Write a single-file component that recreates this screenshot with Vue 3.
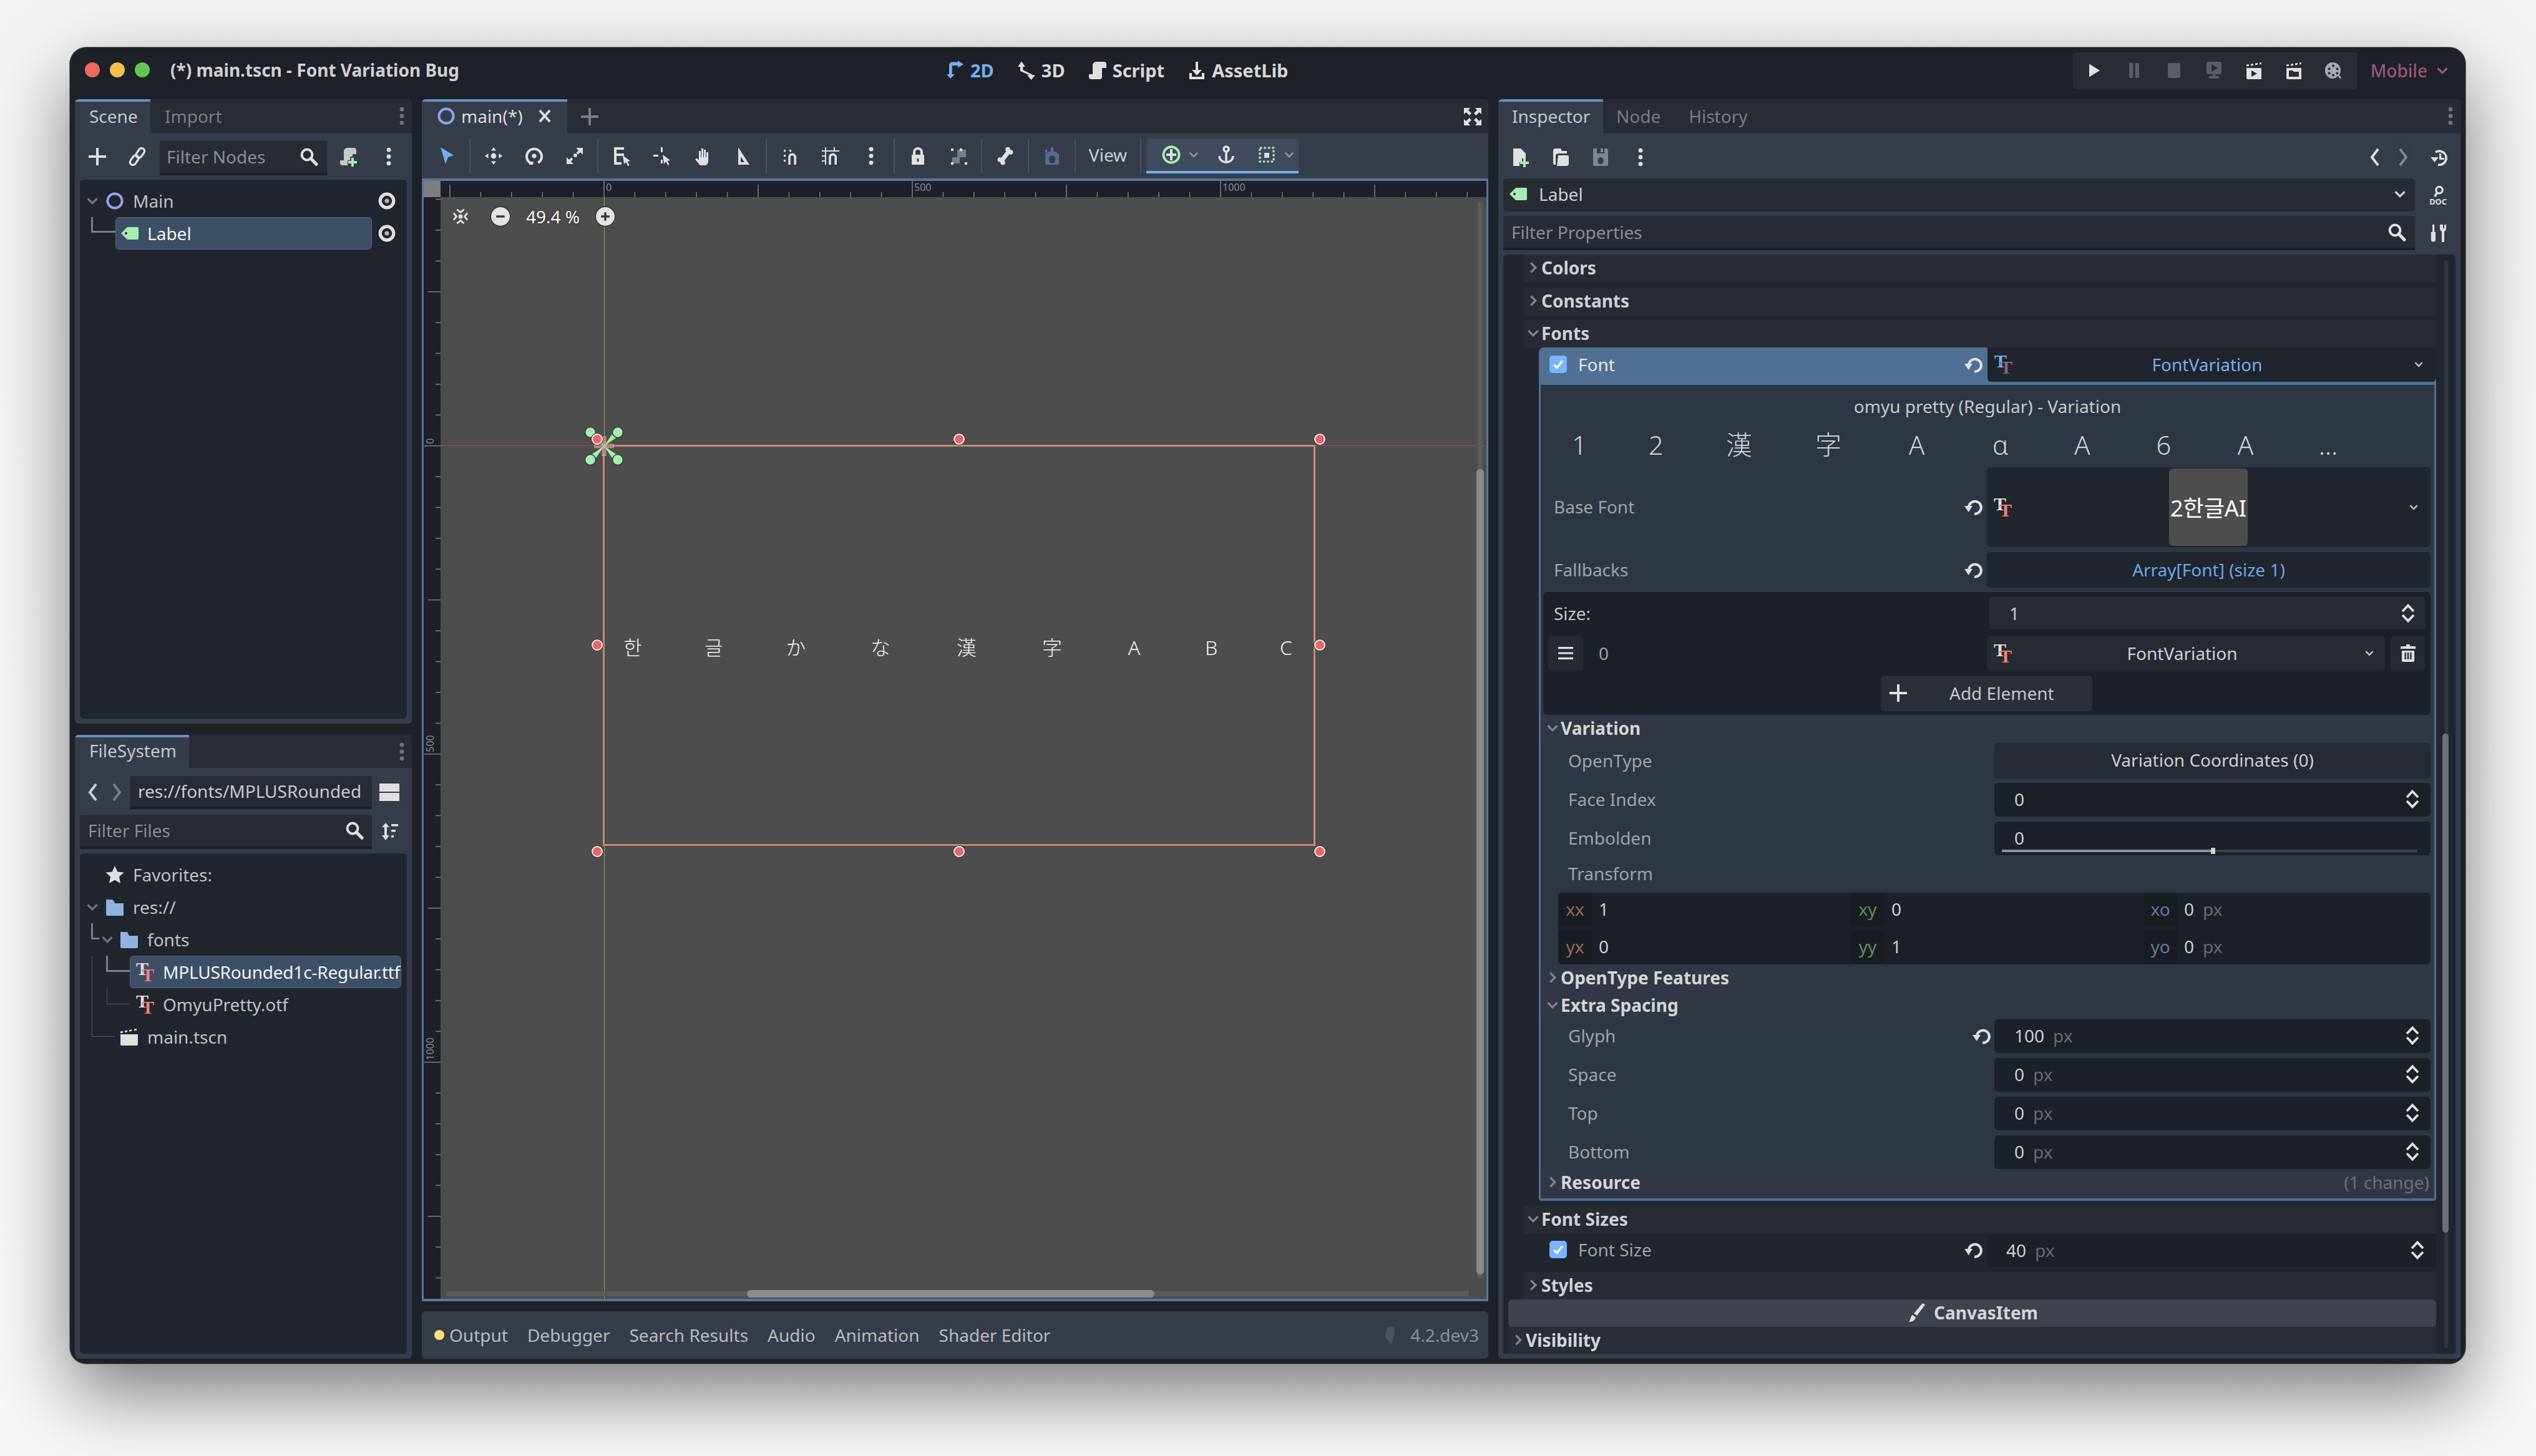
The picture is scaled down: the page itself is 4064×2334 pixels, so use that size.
<template>
  <div class="page">
    <!-- icon sprite, 16x16 like the editor icons -->
    <svg class="sprite" xmlns="http://www.w3.org/2000/svg">
      <symbol id="plus" viewBox="0 0 16 16"><path fill="currentColor" d="M7 1h2v6h6v2H9v6H7V9H1V7h6z" /></symbol>
      <symbol id="link" viewBox="0 0 16 16"><g fill="none" stroke="currentColor" stroke-width="1.7"><rect x="8.2" y="1" width="4.6" height="8.4" rx="2.3" transform="rotate(35 10.5 5)" /><rect x="3.2" y="6.6" width="4.6" height="8.4" rx="2.3" transform="rotate(35 5.5 11)" /></g></symbol>
      <symbol id="search" viewBox="0 0 16 16"><circle cx="6.5" cy="6.5" r="4.2" fill="none" stroke="currentColor" stroke-width="2" /><path d="M9.5 9.5l4.5 4.6" stroke="currentColor" stroke-width="2.6" stroke-linecap="round" /></symbol>
      <symbol id="dots" viewBox="0 0 16 16"><g fill="currentColor"><circle cx="8" cy="2.6" r="1.7" /><circle cx="8" cy="8" r="1.7" /><circle cx="8" cy="13.4" r="1.7" /></g></symbol>
      <symbol id="node" viewBox="0 0 16 16"><circle cx="8" cy="8" r="5.8" fill="none" stroke="#8da5f3" stroke-width="2" /></symbol>
      <symbol id="tag" viewBox="0 0 16 16"><path fill="#a5efac" d="M6 3h8a1 1 0 0 1 1 1v8a1 1 0 0 1-1 1H6L1 8z" /><circle cx="5" cy="8" r="1" fill="#2a3040" /></symbol>
      <symbol id="eye" viewBox="0 0 16 16"><circle cx="8" cy="8" r="5.4" fill="none" stroke="currentColor" stroke-width="2.6" /><circle cx="8" cy="8" r="1.8" fill="#b4b4b4" /></symbol>
      <symbol id="down" viewBox="0 0 16 16"><path fill="none" stroke="currentColor" stroke-width="2.2" d="M3 5.5l5 5 5-5" /></symbol>
      <symbol id="right" viewBox="0 0 16 16"><path fill="none" stroke="currentColor" stroke-width="2.2" d="M5.5 3l5 5-5 5" /></symbol>
      <symbol id="back" viewBox="0 0 16 16"><path fill="none" stroke="currentColor" stroke-width="2" d="M11 1.5L6 8l5 6.5" /></symbol>
      <symbol id="fwd" viewBox="0 0 16 16"><path fill="none" stroke="currentColor" stroke-width="2" d="M5 1.5L10 8l-5 6.5" /></symbol>
      <symbol id="close" viewBox="0 0 16 16"><path fill="none" stroke="currentColor" stroke-width="2.4" d="M3 2.5l10 11M13 2.5l-10 11" /></symbol>
      <symbol id="expand" viewBox="0 0 16 16"><path fill="currentColor" d="M1 1h5L4.5 2.8 7 5.3 5.3 7 2.8 4.500 1 6zM15 1v5l-1.800-1.500L10.700 7 9 5.300 11.500 2.800 10 1zM1 15v-5l1.800 1.500L5.300 9 7 10.700 4.500 13.200 6 15zM15 15h-5l1.500-1.800L9 10.700 10.700 9l2.500 2.500L15 10z" /></symbol>

      <symbol id="m2d" viewBox="0 0 16 16"><path fill="currentColor" d="M4 14.500L1 11h2V4c0-1.500 1-2.700 2.700-2.700H10V0l4.500 3L10 5.800V4H6.200C5.600 4 5.400 4.400 5.400 4.800V11H7.500z" /></symbol>
      <symbol id="m3d" viewBox="0 0 16 16"><path fill="currentColor" d="M4 .8L7 5H5.200v2.600l8.300 4.200H15l-3.200 3.700-3.300-3.700h2L3 8.500V5H1z" /></symbol>
      <symbol id="scroll" viewBox="0 0 16 16"><path fill="currentColor" d="M7 1h6c1.200 0 2 .8 2 2v3h-3.500v7c0 1.500-1 2-2 2H3c-1.500 0-2-1-2-2v-2h3V4c0-2 1.500-3 3-3z" /></symbol>
      <symbol id="scriptadd" viewBox="0 0 16 16"><path fill="currentColor" d="M7 1h5c1.200 0 2 .8 2 2v3h-3v2H9v3H7v4H3c-1.500 0-2-1-2-2v-2h3V4c0-2 1.500-3 3-3z" /><path fill="#a5efac" d="M10 9h2v2.500h2.500v2H12V16h-2v-2.500H7.500v-2H10z" /></symbol>
      <symbol id="asset" viewBox="0 0 16 16"><path fill="currentColor" d="M7 1h2v6.500h3L8 12 4 7.500h3zM2 10h2v3h8v-3h2v5H2z" /></symbol>

      <symbol id="select" viewBox="0 0 16 16"><path fill="currentColor" d="M3 1l10.500 6.500-4.500 1.500-2 5.500z" /></symbol>
      <symbol id="move" viewBox="0 0 16 16"><path fill="currentColor" d="M8 1l2 2.800H6zM8 15l-2-2.800h4zM1 8l2.800-2v4zM15 8l-2.800 2V6z" /><circle cx="8" cy="8" r="2.200" fill="currentColor" /></symbol>
      <symbol id="rotate" viewBox="0 0 16 16"><path fill="none" stroke="currentColor" stroke-width="2" d="M4.800 13.500A6 6 0 1 1 11.200 13.500" /><circle cx="8" cy="8" r="1.800" fill="currentColor" /><path fill="currentColor" d="M4 12.500h3.200V15H4z" /></symbol>
      <symbol id="scale" viewBox="0 0 16 16"><path fill="currentColor" d="M9 1.500h5.500V7l-2-2-1.800 1.800-1.400-1.400L11.100 3.600zM7 14.500H1.500V9l2 2 1.800-1.800 1.400 1.400L4.900 12.400z" /><circle cx="8.500" cy="7.500" r="1.500" fill="currentColor" /></symbol>
      <symbol id="list" viewBox="0 0 16 16"><path fill="currentColor" d="M2 1h8v2H4v3h6v2H4v5h4v2H2z" /><path fill="currentColor" d="M9 7.500l6 4.500-2.200.5 1.500 3-1.200.5-1.500-3L10 14.500z" /></symbol>
      <symbol id="pick" viewBox="0 0 16 16"><path fill="currentColor" d="M7 1h1.500v4H7zM1 7h4v1.500H1zM7 11h1.500v3H7z" /><path fill="currentColor" d="M8.500 7l6 4.500-2.200.5 1.500 3-1.200.5-1.500-3-1.600 2z" /></symbol>
      <symbol id="hand" viewBox="0 0 16 16"><path fill="currentColor" d="M6 15.500L2 10.800l1.200-1L5 11.200V4h1.500v5H7V2h1.500v7H9V3h1.500v6h.5V5h1.500v7c0 2.200-1 3.500-3 3.500z" /></symbol>
      <symbol id="ruler" viewBox="0 0 16 16"><path fill="currentColor" fill-rule="evenodd" d="M4 1l9 14H4zM6 8.500V13h3z" /></symbol>
      <symbol id="snap" viewBox="0 0 16 16"><path fill="none" stroke="currentColor" stroke-width="1.800" d="M7.500 15V9a2.300 2.300 0 0 1 4.600 0v6" /><path fill="currentColor" d="M3 3h1.500v1.600H3zM7.500 3H9v1.600H7.500zM3 7h1.500v1.600H3zM3 11h1.500v1.600H3z" /></symbol>
      <symbol id="grid" viewBox="0 0 16 16"><path fill="none" stroke="currentColor" stroke-width="1" d="M4 1v14M11 1v3M1 4h14M1 8h3M1 12h3" /><path fill="none" stroke="currentColor" stroke-width="1.800" d="M7.500 15V9a2.300 2.300 0 0 1 4.600 0v6" /></symbol>
      <symbol id="lock" viewBox="0 0 16 16"><path fill="currentColor" fill-rule="evenodd" d="M4 7V5a4 4 0 0 1 8 0v2h1v8H3V7zM6 7h4V5a2 2 0 0 0-4 0zM7.300 10v2.500h1.400V10z" /></symbol>
      <symbol id="group" viewBox="0 0 16 16"><path fill="#7c7f85" d="M7 3h7v6H9v5H3V9h4z" /><path fill="currentColor" d="M2 2h2v2H2zM9 2h2v2H9zM13 13h2v2h-2zM2 13h2v2H2z" /></symbol>
      <symbol id="bone" viewBox="0 0 16 16"><path d="M5 12L11 4" stroke="currentColor" stroke-width="3.400" /><g fill="currentColor"><circle cx="10" cy="2.800" r="1.900" /><circle cx="12.300" cy="5" r="1.900" /><circle cx="3.700" cy="11" r="1.900" /><circle cx="6" cy="13.300" r="1.900" /></g></symbol>
      <symbol id="skel" viewBox="0 0 16 16"><path fill="#5a6a9c" fill-rule="evenodd" d="M7 1h2v3.500h1.500l3 2V14a1 1 0 0 1-1 1h-9a1 1 0 0 1-1-1V6.500l3-2H7zM8 7.500A2.600 3.200 0 0 0 8 13.900 2.600 3.200 0 0 0 8 7.500zM2.500 3h1.500v2.500H2.500z" /></symbol>
      <symbol id="over" viewBox="0 0 16 16"><circle cx="8" cy="8" r="6.300" fill="none" stroke="#a5efac" stroke-width="2" /><path fill="#e0e0e0" d="M7 3.500h2V7h3v2H9v3.500H7V9H4V7h3z" /></symbol>
      <symbol id="anchor" viewBox="0 0 16 16"><circle cx="8" cy="3.500" r="2" fill="none" stroke="currentColor" stroke-width="1.800" /><path fill="none" stroke="currentColor" stroke-width="1.800" d="M8 5.500v9M2.500 9c0 3 2.500 5 5.500 5s5.500-2 5.500-5" /></symbol>
      <symbol id="dashrect" viewBox="0 0 16 16"><rect x="2.500" y="2.500" width="11" height="11" fill="none" stroke="#a5efac" stroke-width="1.600" stroke-dasharray="1.800 1.400" /><rect x="6" y="6.500" width="4" height="4" fill="#e0e0e0" /></symbol>

      <symbol id="play" viewBox="0 0 16 16"><path fill="currentColor" d="M4 2.800v10.400L12.500 8z" /></symbol>
      <symbol id="pause" viewBox="0 0 16 16"><path fill="currentColor" d="M4 2h3.200v12H4zM8.800 2H12v12H8.800z" /></symbol>
      <symbol id="stop" viewBox="0 0 16 16"><rect x="3" y="2" width="10" height="12" rx="1.200" fill="currentColor" /></symbol>
      <symbol id="remote" viewBox="0 0 16 16"><path fill="currentColor" fill-rule="evenodd" d="M3 1h10a1 1 0 0 1 1 1v8a1 1 0 0 1-1 1H3a1 1 0 0 1-1-1V2a1 1 0 0 1 1-1zM6 3v6l5-3zM7 11h2v1.500h3v2H4v-2h3z" /></symbol>
      <symbol id="clapplay" viewBox="0 0 16 16"><path fill="currentColor" fill-rule="evenodd" d="M2 3.300l2-.3v1.400l-2 .3zM5.500 2.800l2-.3v1.400l-2 .3zM9 2.300l2-.3v1.400l-2 .3zM12.500 1.800l1.500-.3v1.400l-1.500.3zM2 6h12v9H3a1 1 0 0 1-1-1zM6 8v5l4.500-2.500z" /></symbol>
      <symbol id="clapdir" viewBox="0 0 16 16"><path fill="currentColor" fill-rule="evenodd" d="M2 3.300l2-.3v1.400l-2 .3zM5.500 2.800l2-.3v1.400l-2 .3zM9 2.300l2-.3v1.400l-2 .3zM12.500 1.800l1.500-.3v1.400l-1.500.3zM2 6h12v9H3a1 1 0 0 1-1-1zM4 8v5h8V9H8L7 8z" /></symbol>
      <symbol id="reel" viewBox="0 0 16 16"><path fill="#a8aaae" fill-rule="evenodd" d="M7.500 1.500a6 6.500 0 0 1 5 10l1.500 2.500-1 .8-1.700-2.400A6 6.500 0 1 1 7.500 1.500zM7.500 3.300a1 1 0 1 0 .01 0zM4.300 5.800a1 1 0 1 0 .01 0zM10.700 5.800a1 1 0 1 0 .01 0zM4.300 9.200a1 1 0 1 0 .01 0zM10.700 9.200a1 1 0 1 0 .01 0zM7.500 10.800a1 1 0 1 0 .01 0z" /></symbol>
      <symbol id="ghost" viewBox="0 0 16 16"><path fill="currentColor" d="M9 1c2 0 3 1.500 3 4 0 3-1 5-1.500 7 0 2-.5 3-1.500 3-1 0-1.500-1-1.500-2-1.500-1-3-3-3-5 0-4 2-7 4.500-7z" /></symbol>

      <symbol id="newres" viewBox="0 0 16 16"><path fill="currentColor" d="M2 1h6l4 4v4H9v3H7v3H2z" /><path fill="#a5efac" d="M10 9h2v2.500h2.500v2H12V16h-2v-2.500H7.500v-2H10z" /></symbol>
      <symbol id="open" viewBox="0 0 16 16"><path fill="currentColor" d="M4 1h4l1 2h4v2H6c-1 0-2 1-2 2v7H2.500A1.500 1.500 0 0 1 2 13V3a2 2 0 0 1 2-2zM6 6.500h7.500a1 1 0 0 1 1 1V13a2 2 0 0 1-2 2H5z" /></symbol>
      <symbol id="save" viewBox="0 0 16 16"><path fill="currentColor" fill-rule="evenodd" d="M3 1h2v4h6V1h2l1 1v12a1 1 0 0 1-1 1H3a1 1 0 0 1-1-1V2a1 1 0 0 1 1-1zM8 8a2.300 2.800 0 1 0 .01 0zM8 1h2v3H8z" /></symbol>
      <symbol id="hist" viewBox="0 0 16 16"><path fill="none" stroke="currentColor" stroke-width="1.800" d="M5 4A5.500 5.500 0 1 1 7 14" /><path fill="currentColor" d="M1 8h6.500L4.300 12zM8 5h1.600v3.500H12v1.500H8z" /></symbol>
      <symbol id="doc" viewBox="0 0 16 16"><circle cx="9" cy="3.800" r="2.600" fill="none" stroke="currentColor" stroke-width="1.600" /><path d="M7.200 6l-1.800 3" stroke="currentColor" stroke-width="1.800" /><text x="8" y="15.300" font-size="6.400" font-weight="700" text-anchor="middle" fill="currentColor" font-family="Noto Sans, sans-serif">DOC</text></symbol>
      <symbol id="tools" viewBox="0 0 16 16"><path fill="currentColor" d="M3.500 1h1.600v6H6v6a1.800 1.800 0 0 1-3.600 0V7h1.100zM9.500 1v3c0 1.200.6 2 1.500 2.500V15h2V6.500c.9-.5 1.500-1.300 1.500-2.500V1H13v3h-1V1z" /></symbol>

      <symbol id="reset" viewBox="0 0 16 16"><path fill="none" stroke="currentColor" stroke-width="2" d="M4.500 8A5 5 0 1 1 9 13.800" /><path fill="currentColor" d="M1 7.500h6.500L4.300 12.500z" /></symbol>
      <symbol id="fontw" viewBox="0 0 16 16"><text x="0.500" y="10.500" font-size="15" font-weight="700" fill="#e0e0e0" font-family="Liberation Serif, serif">T</text><text x="5" y="15.500" font-size="15" font-weight="700" fill="#fc7f6f" font-family="Liberation Serif, serif">T</text></symbol>
      <symbol id="fontb" viewBox="0 0 16 16"><text x="0.500" y="10.500" font-size="15" font-weight="700" fill="#6fb2f5" font-family="Liberation Serif, serif">T</text><text x="5" y="15.500" font-size="15" font-weight="700" fill="#85687a" font-family="Liberation Serif, serif">T</text></symbol>
      <symbol id="spin" viewBox="0 0 16 16"><path fill="none" stroke="currentColor" stroke-width="1.900" d="M3.500 6.500L8 1.800l4.500 4.700M3.500 9.500L8 14.200l4.500-4.700" /></symbol>
      <symbol id="bars" viewBox="0 0 16 16"><path fill="currentColor" d="M2 3h12v1.600H2zM2 7.200h12v1.600H2zM2 11.400h12V13H2z" /></symbol>
      <symbol id="trash" viewBox="0 0 16 16"><path fill="currentColor" fill-rule="evenodd" d="M6.500 1h3v1.500H14V4.500H2V2.500h4.500zM3 6h10v8a1 1 0 0 1-1 1H4a1 1 0 0 1-1-1zM5.200 7.500V13h1.200V7.500zM7.400 7.500V13h1.200V7.500zM9.600 7.500V13h1.200V7.500z" /></symbol>
      <symbol id="pencil" viewBox="0 0 16 16"><path fill="currentColor" d="M13 .5l2 1.300L8.500 10.500 6 8.800zM5 10l2.500 1.700c-.5 2.300-2.500 3.800-5.500 3.800 1.500-1.500 1-4.500 3-5.500z" /></symbol>
      <symbol id="star" viewBox="0 0 16 16"><path fill="currentColor" d="M8 1l2.200 4.700 5.100.6-3.800 3.500 1 5.100L8 12.400l-4.500 2.500 1-5.100L.7 6.300l5.100-.6z" /></symbol>
      <symbol id="folder" viewBox="0 0 16 16"><path fill="#8db4e2" d="M1 2h5.500l1.500 3h7v9a1 1 0 0 1-1 1H2a1 1 0 0 1-1-1z" /></symbol>
      <symbol id="scene" viewBox="0 0 16 16"><path fill="currentColor" d="M1 3.700l2-.4v1.400l-2 .4zM4.500 3.100l2-.4v1.400l-2 .4zM8 2.500l2-.4v1.400l-2 .4zM12 1.800l2-.4v1.400l-2 .4zM1 6h14v8a1 1 0 0 1-1 1H2a1 1 0 0 1-1-1z" /></symbol>
      <symbol id="sort" viewBox="0 0 16 16"><path fill="currentColor" d="M5 1l3 3.500H6V11h2l-3 4-3-4h2V4.500H2zM9.500 2H15v1.800H9.500zM9.500 6.500H13v1.800H9.500zM9.500 11h2v1.800h-2z" /></symbol>
      <symbol id="split" viewBox="0 0 16 16"><path fill="currentColor" d="M0 1h16v6.500H0zM0 8.500h16V15H0z" /></symbol>
      <symbol id="fit" viewBox="0 0 16 16"><path fill="currentColor" d="M5.500 1.500L8 3.500l2.500-2 1 1.200L8 5.500 4.500 2.700zM5.500 14.500L8 12.500l2.500 2 1-1.200L8 10.500l-3.500 2.800zM1.500 5.500L3.500 8l-2 2.500 1.200 1L5.500 8 2.700 4.500zM14.500 5.500L12.500 8l2 2.500-1.200 1L10.500 8l2.800-3.500z" /><rect x="6.300" y="6.300" width="3.400" height="3.400" rx=".8" fill="currentColor" /></symbol>
    </svg>

    <div class="window">
      <header class="titlebar">
        <div class="title-left">
          <span class="light red"></span>
          <span class="light yellow"></span>
          <span class="light green"></span>
          <span class="title-text">(*) main.tscn - Font Variation Bug</span>
        </div>
        <nav class="modes">
          <span v-for="m in modes" :key="m.label" class="mode" :class="{ on: m.on }">
            <svg class="ic"><use :href="'#' + m.icon" /></svg>{{ m.label }}
          </span>
        </nav>
        <div class="title-right">
          <div class="run-group">
            <span v-for="r in runIcons" :key="r.icon" class="run" :class="{ dim: r.dim }">
              <svg class="ic"><use :href="'#' + r.icon" /></svg>
            </span>
          </div>
          <span class="mobile">Mobile<svg class="ic-chev"><use href="#down" /></svg></span>
        </div>
      </header>

      <div class="workspace">
        <!-- left docks -->
        <div class="col-left">
          <section class="dock">
            <div class="tabs">
              <span class="tab active tab-scene">Scene</span>
              <span class="tab">Import</span>
              <svg class="ic tab-dots"><use href="#dots" /></svg>
            </div>
            <div class="scene-tools">
              <span class="btn64"><svg class="ic"><use href="#plus" /></svg></span>
              <span class="btn64"><svg class="ic"><use href="#link" /></svg></span>
              <div class="input scene-filter">
                <span class="ph">Filter Nodes</span>
                <svg class="ic"><use href="#search" /></svg>
              </div>
              <span class="btn64">
                <svg class="ic script-add"><use href="#scriptadd" /></svg>
              </span>
              <span class="btn64"><svg class="ic"><use href="#dots" /></svg></span>
            </div>
            <div class="tree scene-tree">
              <div class="tr">
                <svg class="tw"><use href="#down" /></svg>
                <svg class="ic"><use href="#node" /></svg>
                <span class="tr-name">Main</span>
                <svg class="ic eye"><use href="#eye" /></svg>
              </div>
              <div class="tr tr-label">
                <span class="conn thick" style="left: 18px; top: 0; width: 39px; height: 25px"></span>
                <div class="sel sel-label">
                  <svg class="ic"><use href="#tag" /></svg>
                  <span>Label</span>
                </div>
                <svg class="ic eye"><use href="#eye" /></svg>
              </div>
            </div>
          </section>

          <section class="dock">
            <div class="tabs tabs-fs">
              <span class="tab active tab-fs">FileSystem</span>
              <svg class="ic tab-dots"><use href="#dots" /></svg>
            </div>
            <div class="fs-path">
              <svg class="ic nav-b"><use href="#back" /></svg>
              <svg class="ic nav-f"><use href="#fwd" /></svg>
              <div class="input path-input"><span>res://fonts/MPLUSRounded</span></div>
              <svg class="ic split"><use href="#split" /></svg>
            </div>
            <div class="fs-filter">
              <div class="input files-input">
                <span class="ph">Filter Files</span>
                <svg class="ic"><use href="#search" /></svg>
              </div>
              <svg class="ic sort"><use href="#sort" /></svg>
            </div>
            <div class="tree fs-tree">
              <div class="tr tr-fav">
                <svg class="ic"><use href="#star" /></svg>
                <span class="tr-name">Favorites:</span>
              </div>
              <div class="tr">
                <svg class="tw"><use href="#down" /></svg>
                <svg class="ic"><use href="#folder" /></svg>
                <span class="tr-name">res://</span>
              </div>
              <div class="tr tr-d1">
                <span class="conn thick" style="left: 18px; top: 0; width: 13px; height: 26px"></span>
                <svg class="tw"><use href="#down" /></svg>
                <svg class="ic"><use href="#folder" /></svg>
                <span class="tr-name">fonts</span>
              </div>
              <div class="tr">
                <span class="conn vline" style="left: 19px; top: 0; height: 104px"></span>
                <span class="conn thick" style="left: 42px; top: 0; width: 38px; height: 26px"></span>
                <div class="sel sel-file">
                  <svg class="ic"><use href="#fontw" /></svg>
                  <span>MPLUSRounded1c-Regular.ttf</span>
                </div>
              </div>
              <div class="tr">
                <span class="conn thin" style="left: 43px; top: 0; width: 37px; height: 26px"></span>
                <div class="file">
                  <svg class="ic"><use href="#fontw" /></svg>
                  <span class="tr-name-g">OmyuPretty.otf</span>
                </div>
              </div>
              <div class="tr tr-d1 tr-nochev">
                <span class="conn thin" style="left: 19px; top: 0; width: 36px; height: 26px"></span>
                <svg class="ic ml-icon"><use href="#scene" /></svg>
                <span class="tr-name">main.tscn</span>
              </div>
            </div>
          </section>
        </div>

        <!-- main editor -->
        <div class="col-center">
          <section class="editor">
            <div class="tabs tabs-main">
              <span class="tab active tab-main">
                <svg class="ic"><use href="#node" /></svg>
                <span class="tab-main-name">main(*)</span>
                <svg class="ic close"><use href="#close" /></svg>
              </span>
              <svg class="ic new-tab"><use href="#plus" /></svg>
              <svg class="ic fullscreen"><use href="#expand" /></svg>
            </div>
            <div class="toolbar">
              <template v-for="(t, i) in tools" :key="i">
                <span v-if="t === '|'" class="tool-sep"></span>
                <span v-else-if="t === 'View'" class="tool tool-view">View</span>
                <span v-else class="tool" :class="{ blue: t === 'select', skel: t === 'skel' }">
                  <svg class="ic"><use :href="'#' + t" /></svg>
                </span>
              </template>
              <div class="tool-group">
                <svg class="ic"><use href="#over" /></svg>
                <svg class="ic-chev gchev"><use href="#down" /></svg>
                <svg class="ic anchor"><use href="#anchor" /></svg>
                <svg class="ic"><use href="#dashrect" /></svg>
                <svg class="ic-chev gchev"><use href="#down" /></svg>
              </div>
            </div>
            <div class="viewport">
              <div class="ruler-top">
                <span class="ruler-corner"></span>
                <svg class="ruler-svg-h" width="1676" height="26">
                  <line v-for="t in hTicks" :key="t.x" :x1="t.x" :x2="t.x" :y1="t.y" y2="26" stroke="#7e8187" stroke-width="1.500" />
                  <text v-for="l in hLabels" :key="l.t" :x="l.x" y="16" class="ruler-text">{{ l.t }}</text>
                </svg>
              </div>
              <div class="view-body">
                <svg class="ruler-svg-v" width="27" height="1766">
                  <line v-for="t in vTicks" :key="t.y" :x1="t.x" x2="27" :y1="t.y" :y2="t.y" stroke="#7e8187" stroke-width="1.500" />
                  <text v-for="l in vLabels" :key="l.t" :transform="`translate(16 ${l.y}) rotate(-90)`" class="ruler-text">{{ l.t }}</text>
                </svg>
                <div class="canvas">
                  <span class="guide-v"></span>
                  <span class="guide-h"></span>
                  <div class="label-rect"></div>
                  <div class="label-text">
                    <span v-for="g in labelGlyphs" :key="g.c" class="label-glyph" :style="{ width: g.w + 'px' }">{{ g.c }}</span>
                  </div>
                  <svg class="gizmo" viewBox="-36 -36 72 72">
                    <g v-for="a in [45, 135, 225, 315]" :key="a" :transform="`rotate(${a})`">
                      <path d="M0 0L24 -4.500L24 4.500z" fill="#a5efac" />
                      <circle cx="31" cy="0" r="8.500" fill="#a5efac" stroke="#333" stroke-width="1.500" />
                    </g>
                    <path d="M-3.500 -16h7v32h-7zM-16 -3.500h32v7h-32z" fill="#c8c8c8" fill-opacity=".6" />
                    <path d="M-1.500 -14h3v10h-3zM-1.500 4h3v10h-3zM-14 -1.500h10v3h-10zM4 -1.500h10v3h-10z" fill="#e86a6a" />
                  </svg>
                  <span v-for="h in handles" :key="h.x + '-' + h.y" class="handle" :style="{ left: h.x + 'px', top: h.y + 'px' }"></span>
                  <div class="zoom-ctl">
                    <svg class="ic fit"><use href="#fit" /></svg>
                    <span class="zoom-btn">
                      <svg class="zoom-glyph" viewBox="0 0 16 16"><path fill="#333" d="M2 6.500h12v3H2z" /></svg>
                    </span>
                    <span class="zoom-val">49.4 %</span>
                    <span class="zoom-btn">
                      <svg class="zoom-glyph" viewBox="0 0 16 16"><path fill="#333" d="M6.500 2h3v4.500H14v3H9.500V14h-3V9.500H2v-3h4.500z" /></svg>
                    </span>
                  </div>
                  <span class="sb-v-track"></span>
                  <span class="sb-v-grab"></span>
                  <span class="sb-h-track"></span>
                  <span class="sb-h-grab"></span>
                </div>
              </div>
            </div>
          </section>
          <footer class="bottom">
            <span class="out-dot"></span>
            <span class="b-tab" style="margin-left: 8px">Output</span>
            <span v-for="b in bottomTabs" :key="b" class="b-tab">{{ b }}</span>
            <svg class="ic ghost"><use href="#ghost" /></svg>
            <span class="version">4.2.dev3</span>
          </footer>
        </div>

        <!-- inspector -->
        <section class="dock dock-right">
          <div class="tabs">
            <span class="tab active tab-insp">Inspector</span>
            <span class="tab tab-plain">Node</span>
            <span class="tab tab-plain">History</span>
            <svg class="ic tab-dots"><use href="#dots" /></svg>
          </div>
          <div class="insp-tools">
            <span class="btn64"><svg class="ic"><use href="#newres" /></svg></span>
            <span class="btn64"><svg class="ic"><use href="#open" /></svg></span>
            <span class="btn64 dim"><svg class="ic"><use href="#save" /></svg></span>
            <span class="btn64"><svg class="ic"><use href="#dots" /></svg></span>
            <svg class="ic hist-b"><use href="#back" /></svg>
            <svg class="ic hist-f dim"><use href="#fwd" /></svg>
            <svg class="ic hist"><use href="#hist" /></svg>
          </div>
          <div class="insp-select">
            <div class="select-box">
              <svg class="ic"><use href="#tag" /></svg>
              <span class="select-name">Label</span>
              <svg class="ic-chev"><use href="#down" /></svg>
            </div>
            <svg class="ic side"><use href="#doc" /></svg>
          </div>
          <div class="insp-filter">
            <div class="input filter-props">
              <span class="ph">Filter Properties</span>
              <svg class="ic"><use href="#search" /></svg>
            </div>
            <svg class="ic side"><use href="#tools" /></svg>
          </div>

          <div class="insp-scroll">
            <div class="insp-list">
              <div class="sec"><svg class="arr"><use href="#right" /></svg>Colors</div>
              <div class="sec sec-gap"><svg class="arr"><use href="#right" /></svg>Constants</div>
              <div class="sec sec-gap2"><svg class="arr"><use href="#down" /></svg>Fonts</div>

              <div class="font-row">
                <div class="font-left">
                  <span class="check"><svg viewBox="0 0 16 16"><path fill="none" stroke="#fff" stroke-width="2.400" d="M3 8.500l3.500 3.500L13 4" /></svg></span>
                  <span>Font</span>
                  <svg class="ic reset"><use href="#reset" /></svg>
                </div>
                <div class="font-val">
                  <svg class="ic"><use href="#fontb" /></svg>
                  <span class="val-center link-blue">FontVariation</span>
                  <svg class="ic-chev sm"><use href="#down" /></svg>
                </div>
              </div>

              <div class="sub">
                <div class="sub-title">omyu pretty (Regular)  - Variation</div>
                <div class="samples">
                  <span v-for="s in samples" :key="s.w" class="sample" :style="{ width: s.w + 'px' }">{{ s.c }}</span>
                </div>

                <div class="p-row base-row">
                  <div class="p-label">Base Font<svg class="ic reset"><use href="#reset" /></svg></div>
                  <div class="p-val base-val">
                    <svg class="ic"><use href="#fontw" /></svg>
                    <span class="preview">2한글AI</span>
                    <svg class="ic-chev sm"><use href="#down" /></svg>
                  </div>
                </div>
                <div class="p-row fallback-row">
                  <div class="p-label">Fallbacks<svg class="ic reset"><use href="#reset" /></svg></div>
                  <div class="p-val center-val link-blue2">Array[Font] (size 1)</div>
                </div>

                <div class="array">
                  <div class="array-size">
                    <span class="array-size-label">Size:</span>
                    <div class="input size-input"><span>1</span><svg class="ic"><use href="#spin" /></svg></div>
                  </div>
                  <div class="array-item">
                    <span class="handle-box"><svg class="ic"><use href="#bars" /></svg></span>
                    <span class="array-idx">0</span>
                    <div class="array-val">
                      <svg class="ic"><use href="#fontw" /></svg>
                      <span class="val-center">FontVariation</span>
                      <svg class="ic-chev sm"><use href="#down" /></svg>
                    </div>
                    <span class="trash-box"><svg class="ic"><use href="#trash" /></svg></span>
                  </div>
                  <div class="add-el">
                    <svg class="ic"><use href="#plus" /></svg>
                    <span>Add Element</span>
                  </div>
                </div>

                <div class="sub-sec"><svg class="arr"><use href="#down" /></svg>Variation</div>
                <div class="v-row v-open">
                  <div class="v-label">OpenType</div>
                  <div class="v-btn">Variation Coordinates (0)</div>
                </div>
                <div class="v-row v-gap">
                  <div class="v-label">Face Index</div>
                  <div class="v-val"><span>0</span><svg class="ic"><use href="#spin" /></svg></div>
                </div>
                <div class="v-row v-gap2">
                  <div class="v-label">Embolden</div>
                  <div class="v-val v-slider">
                    <span>0</span>
                    <span class="slider-track"><span class="slider-fill"></span><span class="slider-grab"></span></span>
                  </div>
                </div>
                <div class="v-transform">Transform</div>
                <div class="t-grid">
                  <div v-for="c in transformCells" :key="c.k" class="t-cell">
                    <span class="t-key" :class="c.tone">{{ c.k }}</span>
                    <span class="t-num">{{ c.v }}</span>
                    <span v-if="c.px" class="px">px</span>
                  </div>
                </div>
                <div class="sub-sec h44"><svg class="arr"><use href="#right" /></svg>OpenType Features</div>
                <div class="sub-sec h44"><svg class="arr"><use href="#down" /></svg>Extra Spacing</div>
                <div v-for="(s, i) in spacing" :key="s.n" class="v-row" :class="{ 'v-gap2': i > 0 }">
                  <div class="v-label">{{ s.n }}<svg v-if="s.reset" class="ic reset"><use href="#reset" /></svg></div>
                  <div class="v-val"><span>{{ s.v }}</span><span class="px">px</span><svg class="ic"><use href="#spin" /></svg></div>
                </div>
                <div class="sub-sec h47"><svg class="arr"><use href="#right" /></svg>Resource<span class="changes">(1 change)</span></div>
              </div>

              <div class="sec sec-sizes"><svg class="arr"><use href="#down" /></svg>Font Sizes</div>
              <div class="size-row">
                <div class="font-left plain">
                  <span class="check"><svg viewBox="0 0 16 16"><path fill="none" stroke="#fff" stroke-width="2.400" d="M3 8.500l3.500 3.500L13 4" /></svg></span>
                  <span>Font Size</span>
                  <svg class="ic reset"><use href="#reset" /></svg>
                </div>
                <div class="size-val"><span>40</span><span class="px">px</span><svg class="ic"><use href="#spin" /></svg></div>
              </div>
              <div class="sec sec-styles"><svg class="arr"><use href="#right" /></svg>Styles</div>
              <div class="canvas-item"><svg class="ic"><use href="#pencil" /></svg>CanvasItem</div>
              <div class="visibility"><svg class="arr"><use href="#right" /></svg>Visibility</div>
            </div>
            <div class="insp-bar"><span class="insp-bar-grab"></span></div>
          </div>
        </section>
      </div>
    </div>
  </div>
</template>

<script setup>
const modes = [
  { icon: 'm2d', label: '2D', on: true },
  { icon: 'm3d', label: '3D' },
  { icon: 'scroll', label: 'Script' },
  { icon: 'asset', label: 'AssetLib' },
]

const runIcons = [
  { icon: 'play' },
  { icon: 'pause', dim: true },
  { icon: 'stop', dim: true },
  { icon: 'remote', dim: true },
  { icon: 'clapplay' },
  { icon: 'clapdir' },
  { icon: 'reel' },
]

const tools = [
  'select', '|', 'move', 'rotate', 'scale', '|', 'list', 'pick', 'hand', 'ruler', '|',
  'snap', 'grid', 'dots', '|', 'lock', 'group', '|', 'bone', '|', 'skel', '|', 'View', '|',
]

const bottomTabs = ['Debugger', 'Search Results', 'Audio', 'Animation', 'Shader Editor']

// rulers: 0 sits at x=262 / y=399 of their svg, a tick every 50 units (49.4px)
const step = 49.4
const hTicks = []
const hLabels = []
for (let i = -5; i <= 29; i++) {
  const x = 262 + i * step
  const major = i % 10 === 0
  const mid = !major && i % 5 === 0
  hTicks.push({ x, y: major ? 0 : mid ? 6 : 18 })
  if (major) hLabels.push({ x: x + 3, t: String(i * 50) })
}
const vTicks = []
const vLabels = []
for (let i = -8; i <= 27; i++) {
  const y = 398.7 + i * step
  const major = i % 10 === 0
  const mid = !major && i % 5 === 0
  vTicks.push({ y, x: major ? 1 : mid ? 7 : 19 })
  if (major) vLabels.push({ y: y - 3, t: String(i * 50) })
}

// handle centers relative to the canvas
const handles = [
  { x: 251, y: 388 }, { x: 831, y: 388 }, { x: 1409, y: 388 },
  { x: 251, y: 718 }, { x: 1409, y: 718 },
  { x: 251, y: 1049 }, { x: 831, y: 1049 }, { x: 1409, y: 1049 },
]

// the label's text with its 100px glyph spacing
const labelGlyphs = [
  { c: '한', w: 130 }, { c: '글', w: 129.5 }, { c: 'か', w: 133.5 }, { c: 'な', w: 138 }, { c: '漢', w: 138 },
  { c: '字', w: 136 }, { c: 'A', w: 127 }, { c: 'B', w: 120 }, { c: 'C', w: 120 },
]

const samples = [
  { c: '1', w: 120 }, { c: '2', w: 125.5 }, { c: '漢', w: 140.5 }, { c: '字', w: 146 }, { c: 'A', w: 137 },
  { c: 'α', w: 131.5 }, { c: 'A', w: 130.5 }, { c: '6', w: 130.5 }, { c: 'A', w: 132 }, { c: '...', w: 133 },
]

const transformCells = [
  { k: 'xx', v: '1', tone: 'red' }, { k: 'xy', v: '0', tone: 'grn' }, { k: 'xo', v: '0', tone: 'blu', px: true },
  { k: 'yx', v: '0', tone: 'red' }, { k: 'yy', v: '1', tone: 'grn' }, { k: 'yo', v: '0', tone: 'blu', px: true },
]

const spacing = [
  { n: 'Glyph', v: '100', reset: true },
  { n: 'Space', v: '0' },
  { n: 'Top', v: '0' },
  { n: 'Bottom', v: '0' },
]
</script>

<style>
html,
body {
  margin: 0;
  background: #fafafa;
}
</style>

<style scoped>
.page {
  width: 4064px;
  height: 2334px;
  padding: 76px 0 0 112px;
  box-sizing: border-box;
  background: linear-gradient(#f4f4f4, #f8f8f8);
  font-family: 'Noto Sans', 'Noto Sans CJK KR', sans-serif;
  font-size: 28px;
  color: #d4d5d7;
  overflow: hidden;
}
.sprite {
  display: none;
}
.window {
  width: 3839px;
  height: 2110px;
  border-radius: 26px;
  background: #1e2128;
  box-shadow: 0 0 0 1px #6a6c70, 0 48px 120px rgba(0, 0, 0, 0.5);
  overflow: hidden;
  display: flex;
  flex-direction: column;
}
.ic {
  width: 32px;
  height: 32px;
  color: #e0e0e0;
  flex: none;
}
.ic-chev {
  width: 24px;
  height: 24px;
  color: #d0d0d0;
  flex: none;
}
.ic-chev.sm {
  width: 18px;
  height: 18px;
  color: #c4c6ca;
}
.dim {
  opacity: 0.45;
}

/* title bar */
.titlebar {
  height: 83px;
  flex: none;
  display: grid;
  grid-template-columns: 1403px auto 1fr;
  align-items: center;
}
.title-left {
  display: flex;
  align-items: center;
  padding-left: 24px;
  padding-bottom: 11px;
}
.light {
  width: 24px;
  height: 24px;
  border-radius: 50%;
  margin-right: 16px;
}
.red {
  background: #ec6a5e;
}
.yellow {
  background: #f4bf4f;
}
.green {
  background: #61c554;
}
.title-text {
  margin-left: 17px;
  font-weight: 700;
  color: #d0d1d4;
}
.modes {
  display: flex;
  gap: 36px;
  padding-bottom: 10px;
}
.mode {
  display: flex;
  align-items: center;
  gap: 8px;
  font-size: 29px;
  font-weight: 700;
  color: #d6d7d9;
}
.mode.on,
.mode.on .ic {
  color: #75b0f5;
}
.title-right {
  display: flex;
  align-items: center;
  justify-content: flex-end;
  padding-right: 25px;
  padding-bottom: 9px;
}
.run-group {
  display: flex;
  height: 59px;
  align-items: center;
  padding: 0 2px;
  width: 456px;
  box-sizing: border-box;
  border-radius: 6px;
  background: #282c35;
}
.run {
  width: 64px;
  display: flex;
  justify-content: center;
}
.run.dim .ic {
  color: #9a9ca1;
}
.mobile {
  margin-left: 21px;
  display: flex;
  align-items: center;
  gap: 12px;
  color: #96577f;
  font-weight: 500;
}
.mobile .ic-chev {
  color: #96577f;
}

/* overall layout */
.workspace {
  flex: 1;
  display: flex;
  gap: 16px;
  padding: 0 7px 8px 8px;
  min-height: 0;
}
.col-left {
  width: 540px;
  display: flex;
  flex-direction: column;
  gap: 18px;
}
.dock {
  flex: 1;
  min-height: 0;
  display: flex;
  flex-direction: column;
  background: #363d4a;
  border-radius: 6px;
  overflow: hidden;
}
.tabs {
  height: 55px;
  flex: none;
  display: flex;
  background: #282c35;
  position: relative;
}
.tabs-fs {
  height: 53px;
}
.tab {
  display: flex;
  align-items: center;
  box-sizing: border-box;
  padding: 0 23px 2px;
  color: #7b7e84;
}
.tab.active {
  background: #363d4a;
  border-top: 4px solid #6690c4;
  padding-bottom: 6px;
  color: #c6c7ca;
}
.tab-scene {
  width: 121px;
}
.tab-fs {
  width: 183px;
}
.tab-insp {
  width: 168px;
  padding-left: 22px;
}
.tab-plain {
  padding: 0 0 2px 22px;
  margin-right: 24px;
  margin-left: -1px;
}
.tab-dots {
  position: absolute;
  right: 0;
  top: 11px;
  color: #6f737b;
}
.input {
  display: flex;
  align-items: center;
  justify-content: space-between;
  box-sizing: border-box;
  background: #272b34;
  border-bottom: 4px solid #1c1f26;
  border-radius: 4px 4px 0 0;
}
.ph {
  color: #8b8e94;
}
.btn64 {
  width: 64px;
  display: flex;
  justify-content: center;
  flex: none;
}
.scene-tools {
  height: 74px;
  flex: none;
  display: flex;
  align-items: center;
  padding-left: 4px;
}
.scene-filter {
  width: 268px;
  height: 55px;
  margin: 4px 3px 0 4px;
  padding: 0 13px 0 11px;
}
.script-add {
  color: #c8c8c8;
}
.tree {
  flex: 1;
  margin: 0 8px 8px;
  padding-top: 8px;
  background: #21252d;
  border-radius: 6px;
}
.tr {
  position: relative;
  height: 52px;
  display: flex;
  align-items: center;
  padding-left: 8px;
  color: #c0c2c6;
}
.tw {
  width: 24px;
  height: 24px;
  margin-right: 8px;
  color: #72767d;
  flex: none;
}
.tr-name {
  margin-left: 13px;
}
.tr-name-g {
  color: #c0c2c6;
}
.eye {
  margin-left: auto;
  margin-right: 16px;
}
.tr-label {
  padding-left: 57px;
}
.sel {
  display: flex;
  align-items: center;
  gap: 12px;
  box-sizing: border-box;
  height: 52px;
  border: 1px solid #5a6678;
  border-radius: 6px;
  background: #3c4f66;
  color: #f4f4f4;
  overflow: hidden;
  white-space: nowrap;
}
.sel-label {
  width: 411px;
  padding-left: 6px;
  font-size: 28px;
}
.conn {
  position: absolute;
  box-sizing: border-box;
}
.thick {
  border-left: 3px solid #7b7e84;
  border-bottom: 3px solid #7b7e84;
}
.thin {
  border-left: 1px solid #5a5e66;
  border-bottom: 1px solid #5a5e66;
}
.vline {
  border-left: 1px solid #5a5e66;
}
.fs-path {
  height: 71px;
  box-sizing: border-box;
  padding-top: 8px;
  flex: none;
  display: flex;
  align-items: center;
}
.nav-b {
  margin-left: 12px;
  color: #d0d0d0;
}
.nav-f {
  margin-left: 8px;
  color: #7b7e84;
}
.path-input {
  width: 388px;
  height: 53px;
  margin: 0 12px 0 4px;
  padding-left: 13px;
  color: #c9cacd;
  white-space: nowrap;
  overflow: hidden;
}
.split {
  margin-left: 0;
}
.fs-filter {
  height: 55px;
  flex: none;
  margin-top: 4px;
  margin-bottom: 7px;
  display: flex;
  align-items: center;
}
.files-input {
  width: 468px;
  height: 55px;
  margin-left: 8px;
  padding: 0 12px 0 13px;
}
.sort {
  margin-left: 12px;
}
.tr-fav {
  padding-left: 40px;
}
.tr-d1 {
  padding-left: 32px;
}
.tr-nochev {
  padding-left: 63px;
}
.tr-d1 .tw {
  margin-right: 7px;
}
.sel-file {
  position: relative;
  margin-left: 72px;
  width: 435px;
  padding-left: 8px;
  letter-spacing: -0.2px;
}
.file {
  margin-left: 72px;
  padding-left: 9px;
  display: flex;
  align-items: center;
  gap: 12px;
}

/* center */
.col-center {
  width: 1709px;
  flex: none;
  display: flex;
  flex-direction: column;
  gap: 16px;
}
.editor {
  height: 1927px;
  flex: none;
  display: flex;
  flex-direction: column;
  background: #363d4a;
  border-radius: 6px 6px 0 0;
  overflow: hidden;
}
.tabs-main {
  align-items: stretch;
}
.tab-main {
  width: 233px;
  padding: 0 0 6px 23px;
}
.tab-main-name {
  margin-left: 8px;
  color: #dcdcdc;
}
.tab-main .close {
  width: 26px;
  height: 26px;
  margin-left: 22px;
}
.new-tab {
  align-self: center;
  margin-left: 20px;
  color: #7c7f85;
}
.fullscreen {
  align-self: center;
  margin-left: auto;
  margin-right: 9px;
}
.toolbar {
  height: 72px;
  flex: none;
  display: flex;
  align-items: center;
  padding-left: 7px;
}
.tool {
  width: 65px;
  display: flex;
  justify-content: center;
  align-items: center;
  flex: none;
}
.tool.blue .ic {
  color: #74aef2;
}
.tool-view {
  width: 95px;
  color: #cdcfd2;
  padding-bottom: 4px;
}
.tool-sep {
  width: 10px;
  height: 56px;
  flex: none;
  position: relative;
}
.tool-sep::after {
  content: '';
  position: absolute;
  left: 4px;
  top: 0;
  bottom: 0;
  width: 2px;
  background: #4a505d;
}
.tool-group {
  margin-left: 4px;
  width: 244px;
  height: 56px;
  box-sizing: border-box;
  display: flex;
  align-items: center;
  background: #3f4a5c;
  border-bottom: 4px solid #75b0f5;
  border-radius: 6px 6px 0 0;
  padding-left: 24px;
}
.gchev {
  width: 20px;
  height: 20px;
  margin-left: 10px;
  color: #93979e;
}
.anchor {
  margin-left: 26px;
  margin-right: 33px;
}
.viewport {
  flex: 1;
  min-height: 0;
  display: flex;
  flex-direction: column;
  box-sizing: border-box;
  border: 3px solid #55779f;
  border-width: 4px 3px;
  background: #1d2028;
}
.ruler-top {
  height: 26px;
  flex: none;
  display: flex;
}
.ruler-corner {
  width: 27px;
  height: 26px;
  flex: none;
  background: #7c7e83;
}
.ruler-text {
  font-size: 16px;
  fill: #888b91;
}
.view-body {
  flex: 1;
  min-height: 0;
  display: flex;
}
.ruler-svg-v {
  flex: none;
}
.canvas {
  position: relative;
  flex: 1;
  background: #4d4d4d;
  overflow: hidden;
}
.guide-v {
  position: absolute;
  left: 262px;
  top: 0;
  bottom: 0;
  width: 1px;
  background: #8aa845;
}
.guide-h {
  position: absolute;
  left: 0;
  right: 0;
  top: 398px;
  height: 1px;
  background: #c23f58;
}
.label-rect {
  position: absolute;
  left: 260px;
  top: 397px;
  width: 1142px;
  height: 643px;
  box-sizing: border-box;
  border: 3.500px solid #c98b6e;
}
.label-text {
  position: absolute;
  left: 243px;
  top: 700px;
  display: flex;
  font-family: 'Noto Sans', 'Noto Sans CJK KR', sans-serif;
  font-size: 32px;
  font-weight: 300;
  line-height: 44px;
  color: #f4f4f4;
  white-space: nowrap;
}
.label-glyph {
  flex: none;
  text-align: center;
}
.gizmo {
  position: absolute;
  left: 226px;
  top: 363px;
  width: 72px;
  height: 72px;
}
.handle {
  position: absolute;
  width: 14px;
  height: 14px;
  margin: -9px 0 0 -9px;
  border-radius: 50%;
  background: #ea6565;
  border: 2px solid #f4f4f4;
  box-shadow: 0 0 0 1px #333;
}
.zoom-ctl {
  position: absolute;
  left: 17px;
  top: 15px;
  height: 32px;
  display: flex;
  align-items: center;
  color: #fff;
}
.fit {
  width: 30px;
  height: 30px;
}
.zoom-btn {
  width: 30px;
  height: 30px;
  box-sizing: border-box;
  border-radius: 50%;
  background: #e2e2e2;
  box-shadow: 0 0 0 1.500px #333;
  display: flex;
  align-items: center;
  justify-content: center;
  margin-left: 34px;
}
.zoom-glyph {
  width: 18px;
  height: 18px;
}
.zoom-val {
  margin-left: 26px;
  margin-right: -8px;
  text-shadow: 0 0 2px #222, 0 0 2px #222;
}
.sb-v-track {
  position: absolute;
  right: 6px;
  top: 8px;
  bottom: 32px;
  width: 8px;
  border-radius: 4px;
  background: #5b5b5b;
}
.sb-v-grab {
  position: absolute;
  right: 4px;
  top: 436px;
  bottom: 39px;
  width: 12px;
  border-radius: 6px;
  background: #8c8c8c;
}
.sb-h-track {
  position: absolute;
  left: 9px;
  right: 28px;
  bottom: 4px;
  height: 8px;
  background: #5b5b5b;
}
.sb-h-grab {
  position: absolute;
  left: 491px;
  width: 653px;
  bottom: 2px;
  height: 12px;
  border-radius: 6px;
  background: #8c8c8c;
}
.bottom {
  height: 76px;
  flex: none;
  display: flex;
  align-items: center;
  gap: 31px;
  padding: 0 15px 0 20px;
  background: #363d4a;
  border-radius: 6px;
  color: #b9bbbf;
  font-size: 28px;
}
.out-dot {
  width: 16px;
  height: 16px;
  border-radius: 50%;
  background: #ffe27a;
  margin-right: -31px;
}
.b-tab {
  white-space: nowrap;
}
.ghost {
  margin-left: auto;
  color: #4d525c;
}
.version {
  color: #8c9098;
  margin-left: -14px;
}

/* inspector */
.dock-right {
  flex: none;
  width: 1542px;
}
.insp-tools {
  height: 72px;
  flex: none;
  display: flex;
  align-items: center;
  padding-left: 4px;
  padding-top: 4px;
  box-sizing: border-box;
}
.hist-b {
  margin-left: auto;
}
.hist-f {
  margin-left: 15px;
}
.hist {
  margin-left: 25px;
  margin-right: 18px;
}
.insp-select,
.insp-filter {
  display: flex;
  align-items: center;
  flex: none;
  padding-left: 8px;
}
.insp-select {
  height: 53px;
  margin-bottom: 7px;
}
.insp-filter {
  height: 55px;
  margin-bottom: 7px;
}
.select-box {
  width: 1461px;
  height: 53px;
  display: flex;
  align-items: center;
  box-sizing: border-box;
  background: #272b34;
  border-radius: 6px;
  padding: 0 0 3px 8px;
}
.select-name {
  margin-left: 17px;
  color: #cfd0d3;
}
.select-box .ic-chev {
  margin-left: auto;
  margin-right: 12px;
}
.filter-props {
  width: 1461px;
  height: 55px;
  padding: 0 13px;
}
.side {
  margin-left: 21px;
}
.insp-scroll {
  flex: 1;
  min-height: 0;
  margin: 0 8px 8px;
  padding-left: 8px;
  display: flex;
  background: #21252d;
  border-radius: 6px 6px 0 0;
  overflow: hidden;
}
.insp-list {
  width: 1487px;
  flex: none;
  overflow: hidden;
}
.insp-bar {
  flex: 1;
  display: flex;
  justify-content: center;
  padding-top: 9px;
  padding-bottom: 8px;
  position: relative;
}
.insp-bar::before {
  content: '';
  width: 6px;
  background: #313641;
  border-radius: 3px;
}
.insp-bar-grab {
  position: absolute;
  left: 10px;
  top: 768px;
  width: 10px;
  height: 800px;
  border-radius: 5px;
  background: #6d7077;
}
.arr {
  width: 24px;
  height: 24px;
  margin: 0 1px 0 -4px;
  color: #7f838b;
  flex: none;
}
.sec,
.sub-sec,
.canvas-item,
.visibility {
  box-sizing: border-box;
  padding-bottom: 3px;
}
.sec {
  margin-left: 25px;
  height: 45px;
  display: flex;
  align-items: center;
  padding-left: 7px;
  background: #272b34;
  font-weight: 700;
  color: #d0d1d4;
}
.sec-gap {
  margin-top: 8px;
}
.sec-gap2 {
  margin-top: 7px;
  height: 44px;
}
.font-row {
  margin-left: 49px;
  height: 60px;
  display: flex;
  background: #4f6f93;
  border-radius: 8px 0 0 0;
  align-items: flex-start;
  color: #e8e8e8;
}
.font-left {
  width: 719px;
  height: 55px;
  flex: none;
  display: flex;
  align-items: center;
  padding: 0 7px 2px 17px;
  box-sizing: border-box;
  gap: 18px;
}
.font-left .reset,
.p-label .reset,
.v-label .reset {
  margin-left: auto;
}
.check {
  width: 28px;
  height: 28px;
  flex: none;
  border-radius: 5px;
  background: #7ab3ff;
  display: flex;
  align-items: center;
  justify-content: center;
}
.check svg {
  width: 22px;
  height: 22px;
}
.font-val {
  flex: 1;
  height: 55px;
  display: flex;
  align-items: center;
  box-sizing: border-box;
  padding: 0 19px 2px 10px;
  background: #20242c;
  border-radius: 0 0 6px 6px;
}
.val-center {
  flex: 1;
  text-align: center;
  padding-right: 20px;
  color: #cfd0d3;
}
.link-blue {
  color: #78aef0;
}
.sub {
  margin-left: 49px;
  box-sizing: border-box;
  height: 1308px;
  background: #2d3744;
  border: 3px solid #4f6f93;
  border-width: 0 3px 5px;
  border-radius: 0 0 4px 4px;
}
.sub-title {
  height: 70px;
  box-sizing: border-box;
  padding-bottom: 3px;
  display: flex;
  align-items: center;
  justify-content: center;
  white-space: pre;
  color: #c9cacd;
}
.samples {
  height: 52px;
  margin-bottom: 10px;
  padding-left: 2px;
  display: flex;
  align-items: center;
}
.sample {
  flex: none;
  text-align: center;
  font-size: 42px;
  line-height: 50px;
  font-weight: 300;
  color: #d2d4d7;
}
.p-row {
  display: flex;
  padding-right: 6px;
}
.p-label {
  width: 715px;
  flex: none;
  box-sizing: border-box;
  display: flex;
  align-items: center;
  padding: 0 6px 2px 21px;
  color: #a0a3a9;
}
.p-val {
  flex: 1;
  display: flex;
  align-items: center;
  background: #21252d;
  border-radius: 6px;
}
.base-row {
  height: 128px;
  margin-bottom: 8px;
}
.base-val {
  padding: 0 18px 0 10px;
  position: relative;
}
.base-val .ic-chev {
  margin-left: auto;
}
.preview {
  position: absolute;
  left: 292px;
  top: 2px;
  bottom: 2px;
  width: 126px;
  background: #4d4d4d;
  border-radius: 6px;
  display: flex;
  align-items: center;
  justify-content: center;
  color: #fff;
  font-size: 36px;
  font-weight: 400;
  padding-bottom: 2px;
  box-sizing: border-box;
  overflow: hidden;
  white-space: nowrap;
}
.fallback-row {
  height: 57px;
  margin-bottom: 7px;
}
.center-val {
  justify-content: center;
  box-sizing: border-box;
  padding-bottom: 2px;
}
.link-blue2 {
  color: #6ea5e8;
}
.array {
  margin: 0 6px 0 4px;
  height: 197px;
  background: #1c2028;
  border-radius: 6px;
  box-sizing: border-box;
  padding-top: 8px;
}
.array-size {
  display: flex;
  align-items: center;
  height: 51px;
  padding-right: 9px;
}
.array-size-label {
  width: 715px;
  padding-left: 17px;
  box-sizing: border-box;
  color: #c6c7ca;
}
.size-input {
  width: 698px;
  height: 51px;
  padding: 0 11px 0 32px;
  border-bottom: none;
  color: #cfd0d3;
}
.array-item {
  margin-top: 11px;
  height: 56px;
  display: flex;
  align-items: center;
  padding: 0 9px 0 8px;
  color: #a0a3a9;
}
.handle-box {
  width: 56px;
  height: 56px;
  flex: none;
  display: flex;
  align-items: center;
  justify-content: center;
  background: #262a33;
  border-radius: 6px;
}
.array-idx {
  width: 647px;
  padding-left: 25px;
  box-sizing: border-box;
}
.array-val {
  width: 638px;
  height: 56px;
  flex: none;
  display: flex;
  align-items: center;
  padding: 0 16px 0 10px;
  box-sizing: border-box;
  background: #262a33;
  border-radius: 6px;
}
.trash-box {
  width: 55px;
  height: 56px;
  margin-left: 9px;
  flex: none;
  display: flex;
  align-items: center;
  justify-content: center;
  background: #262a33;
  border-radius: 6px;
}
.add-el {
  width: 339px;
  height: 57px;
  margin: 8px 0 0 541px;
  display: flex;
  align-items: center;
  padding: 0 0 2px 12px;
  box-sizing: border-box;
  gap: 66px;
  background: #2b2f38;
  border-radius: 6px;
  color: #c6c7ca;
}
.sub-sec {
  height: 45px;
  display: flex;
  align-items: center;
  padding-left: 11px;
  background: #313744;
  font-weight: 700;
  color: #d4d5d7;
}
.h44 {
  height: 44px;
}
.h47 {
  height: 47px;
  padding-bottom: 6px;
}
.changes {
  margin-left: auto;
  margin-right: 8px;
  font-weight: 400;
  color: #6d7079;
}
.v-row {
  display: flex;
  height: 54px;
  padding-right: 6px;
}
.v-open {
  height: 57px;
}
.v-gap {
  margin-top: 7px;
}
.v-gap2 {
  margin-top: 8px;
}
.v-label {
  width: 727px;
  flex: none;
  box-sizing: border-box;
  display: flex;
  align-items: center;
  padding: 0 5px 2px 44px;
  color: #a0a3a9;
}
.v-btn {
  flex: 1;
  display: flex;
  align-items: center;
  justify-content: center;
  padding-bottom: 3px;
  box-sizing: border-box;
  background: #262a33;
  border-radius: 6px;
  color: #cfd0d3;
}
.v-val {
  flex: 1;
  display: flex;
  align-items: center;
  padding: 0 13px 2px 32px;
  box-sizing: border-box;
  background: #1c2028;
  border-radius: 6px;
  color: #cfd0d3;
}
.v-val .ic {
  margin-left: auto;
}
.px {
  margin-left: 14px;
  color: #676a72;
}
.v-slider {
  position: relative;
}
.slider-track {
  position: absolute;
  left: 12px;
  right: 21px;
  bottom: 5px;
  height: 4px;
  background: #3e424a;
}
.slider-fill {
  position: absolute;
  left: 0;
  top: 0;
  bottom: 0;
  width: 337px;
  background: #8f9196;
}
.slider-grab {
  position: absolute;
  left: 335px;
  top: -3px;
  width: 7px;
  height: 10px;
  background: #d0d0d0;
}
.v-transform {
  height: 60px;
  box-sizing: border-box;
  padding-bottom: 3px;
  display: flex;
  align-items: center;
  padding-left: 44px;
  color: #a0a3a9;
}
.t-grid {
  margin: 0 6px 0 28px;
  height: 115px;
  display: grid;
  grid-template-columns: 469px 469px 460px;
  grid-template-rows: 55px 55px;
  row-gap: 5px;
  background: #1c2028;
  border-radius: 6px;
}
.t-cell {
  display: flex;
  align-items: center;
  box-sizing: border-box;
  color: #cfd0d3;
}
.t-num {
  padding-bottom: 3px;
}
.t-key {
  width: 54px;
  height: 100%;
  flex: none;
  display: flex;
  align-items: center;
  justify-content: center;
  box-sizing: border-box;
  padding-bottom: 3px;
  background: #191c23;
  border-radius: 6px;
  margin-right: 11px;
}
.t-cell .px {
  padding-bottom: 3px;
}
.t-key.red {
  color: #8f6c5f;
}
.t-key.grn {
  color: #5f8e66;
}
.t-key.blu {
  color: #5f7f9d;
}
.sec-sizes {
  margin-top: 8px;
  height: 44px;
}
.size-row {
  margin-left: 49px;
  height: 54px;
  display: flex;
  color: #a0a3a9;
}
.font-left.plain {
  height: 54px;
}
.size-val {
  flex: 1;
  display: flex;
  align-items: center;
  padding: 0 14px 0 30px;
  background: #1c2028;
  border-radius: 6px;
  color: #cfd0d3;
}
.size-val .ic {
  margin-left: auto;
}
.sec-styles {
  margin-top: 8px;
  height: 44px;
}
.canvas-item {
  height: 44px;
  display: flex;
  align-items: center;
  justify-content: center;
  gap: 12px;
  padding-right: 0;
  background: #3f434d;
  border-radius: 6px;
  font-weight: 700;
  color: #d4d5d7;
}
.visibility {
  height: 44px;
  display: flex;
  align-items: center;
  padding-left: 8px;
  background: #292d36;
  font-weight: 700;
  color: #d4d5d7;
}
.visibility .arr {
  margin-right: 0;
}
</style>
